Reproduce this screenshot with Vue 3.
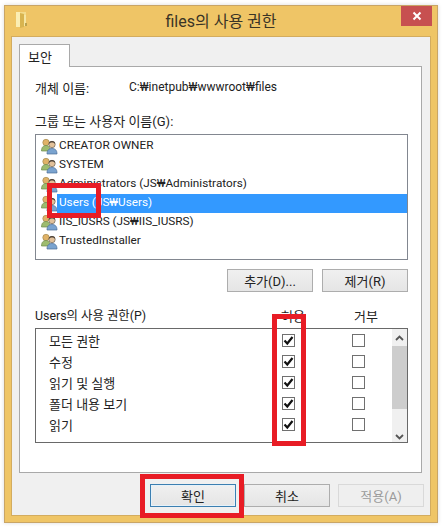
<script setup>
const users = [
  { name: 'CREATOR OWNER' },
  { name: 'SYSTEM' },
  { name: 'Administrators (JS₩Administrators)' },
  { name: 'Users (JS₩Users)', selected: true },
  { name: 'IIS_IUSRS (JS₩IIS_IUSRS)' },
  { name: 'TrustedInstaller' },
]
const perms = ['모든 권한', '수정', '읽기 및 실행', '폴더 내용 보기', '읽기']
</script>

<template>
  <div class="page">
    <div class="window">
      <header class="titlebar">
        <svg class="folder" width="14" height="18" viewBox="0 0 14 18">
          <path d="M1 1h10v14H1z" fill="#f3dc8c" />
          <path d="M1 1h4v15H1z" fill="#fbeeb4" />
          <path d="M5 2l4 1v13l-4 1z" fill="#d8b44f" />
          <path d="M9 4h2v11H9z" fill="#f6e6a2" />
          <path d="M10 12h2v3h-2z" fill="#b9a14e" />
        </svg>
        <div class="title">files의 사용 권한</div>
        <div class="close">
          <svg width="10" height="10" viewBox="0 0 10 10"><path d="M1.5 1.5l7 7M8.500 1.500l-7 7" stroke="#fff" stroke-width="2" /></svg>
        </div>
      </header>

      <main class="client">
        <div class="tabs"><div class="tab">보안</div></div>
        <section class="panel">
          <div class="object">
            <span class="obj-label">개체 이름:</span>
            <span class="obj-path">C:₩inetpub₩wwwroot₩files</span>
          </div>
          <div class="group-label">그룹 또는 사용자 이름(G):</div>
          <ul class="userlist">
            <li v-for="u in users" :key="u.name" class="user">
              <svg class="uicon" width="17" height="17" viewBox="0 0 17 17">
                <circle cx="5" cy="4.500" r="3.200" fill="#e0b267" stroke="#a58a4f" stroke-width=".7" />
                <path d="M.5 13c0-4 2-5.500 4.500-5.500S9 9 9 13z" fill="#9dbb6f" stroke="#6b8a4b" stroke-width=".7" />
                <circle cx="11" cy="6.500" r="3.200" fill="#e2c19a" stroke="#6d6355" stroke-width=".7" />
                <path d="M7.800 6c0-2.200 1.400-3 3.200-3s3.200.8 3.200 3c-1-1.200-2-1.400-3.200-1.400S8.800 4.800 7.800 6z" fill="#4d4338" />
                <path d="M6 16c0-4 2-5.500 5-5.500s5 1.500 5 5.500z" fill="#7aa3cf" stroke="#4a6d96" stroke-width=".7" />
              </svg>
              <span class="uname" :class="{ selected: u.selected }">{{ u.name }}</span>
            </li>
          </ul>
          <div class="actions">
            <button class="btn">추가(D)...</button>
            <button class="btn">제거(R)</button>
          </div>
          <div class="perm-head">
            <span class="perm-title">Users의 사용 권한(P)</span>
            <span class="col">허용</span>
            <span class="col deny">거부</span>
          </div>
          <div class="permbox">
            <div class="permrows">
              <div v-for="p in perms" :key="p" class="perm">
                <span class="pname">{{ p }}</span>
                <span class="cell">
                  <span class="check">
                    <svg width="11" height="11" viewBox="0 0 11 11"><path d="M1.500 5.500l2.800 3L9.500 2" fill="none" stroke="#111" stroke-width="2.200" /></svg>
                  </span>
                </span>
                <span class="cell"><span class="check"></span></span>
              </div>
            </div>
            <div class="scroll">
              <svg class="arrow" width="9" height="6" viewBox="0 0 9 6"><path d="M1 5l3.500-3.500L8 5" fill="none" stroke="#555" stroke-width="1.800" /></svg>
              <div class="thumb"></div>
              <svg class="arrow down" width="9" height="6" viewBox="0 0 9 6"><path d="M1 1l3.500 3.500L8 1" fill="none" stroke="#555" stroke-width="1.800" /></svg>
            </div>
          </div>
        </section>
        <footer class="footer">
          <button class="btn primary">확인</button>
          <button class="btn">취소</button>
          <button class="btn disabled">적용(A)</button>
        </footer>
      </main>

      <div class="mark mark-user"></div>
      <div class="mark mark-allow"></div>
      <div class="mark mark-ok"></div>
    </div>
  </div>
</template>

<style>
html, body { margin: 0; background: #fff; }
</style>

<style scoped>
.page {
  width: 443px;
  height: 529px;
  padding: 5px 0 0 4px;
  box-sizing: border-box;
  font-family: Roboto, "Noto Sans CJK KR", sans-serif;
  font-size: 13px;
  color: #222;
  overflow: hidden;
}
.window {
  position: relative;
  width: 434px;
  height: 518px;
  box-sizing: border-box;
  background: #efc566;
  border: 1px solid #c9a566;
  box-shadow: 0 0 4px rgba(0, 0, 0, .15);
  display: flex;
  flex-direction: column;
  padding: 0 6px 6px 6px;
}
.titlebar {
  height: 30px;
  flex: none;
  display: flex;
  align-items: center;
  justify-content: center;
  position: relative;
}
.folder { position: absolute; left: 4px; top: 5px; }
.title { font-size: 16px; color: #3a3426; margin-top: -2px; }
.close {
  position: absolute;
  right: -1px;
  top: 0;
  width: 31px;
  height: 20px;
  background: #c75050;
  display: flex;
  align-items: center;
  justify-content: center;
}
.client {
  flex: 1;
  background: #f0f0f0;
  border: 1px solid #d3ac5f;
  padding: 7px 6px 0 7px;
  display: flex;
  flex-direction: column;
  min-height: 0;
}
.tabs { height: 22px; display: flex; flex: none; }
.tab {
  width: 51px;
  height: 23px;
  box-sizing: border-box;
  background: #fff;
  border: 1px solid #a9a9a9;
  border-bottom: 0;
  position: relative;
  z-index: 1;
  padding: 2px 0 0 8px;
}
.panel {
  background: #fff;
  border: 1px solid #a9a9a9;
  width: 403px;
  height: 407px;
  box-sizing: border-box;
  padding: 0 13px 0 15px;
  flex: none;
}
.object { display: flex; height: 18px; align-items: center; margin-top: 11px; }
.obj-label { width: 94px; }
.obj-path { font-size: 12px; }
.group-label { height: 18px; line-height: 18px; margin-top: 17px; }
.userlist {
  list-style: none;
  margin: 3px 0 0;
  padding: 2px 0 0 5px;
  height: 126px;
  box-sizing: border-box;
  border: 1px solid #828790;
}
.user { height: 19px; display: flex; align-items: center; font-size: 11.75px; }
.uicon { flex: none; margin-right: -1px; }
.uname { padding: 0 2px; height: 19px; line-height: 17px; white-space: nowrap; }
.uname.selected { background: #3399ff; color: #fff; flex: 1; }
.actions { display: flex; justify-content: flex-end; gap: 9px; margin-top: 9px; }
.btn {
  width: 86px;
  height: 23px;
  box-sizing: border-box;
  border: 1px solid #adadad;
  background: linear-gradient(#f0f0f0, #e5e5e5);
  font: inherit;
  color: #222;
  padding: 0;
}
.btn.primary { border-color: #3c7fb1; box-shadow: inset 0 0 0 1px #e6f2fa; }
.btn.disabled { color: #9a9a9a; border-color: #d9d9d9; background: #efefef; }
.perm-head { display: flex; align-items: center; height: 18px; margin-top: 14px; }
.perm-title { width: 223px; font-size: 12.4px; }
.col { width: 70px; text-align: center; }
.deny { margin-left: 3px; }
.permbox {
  margin-top: 4px;
  height: 115px;
  box-sizing: border-box;
  border: 1px solid #696969;
  display: flex;
}
.permrows { flex: 1; min-width: 0; padding: 1px 0 0 13px; }
.perm { height: 21px; display: flex; align-items: center; }
.pname { width: 233px; flex: none; }
.cell { width: 70px; flex: none; display: flex; justify-content: flex-start; }
.cell:last-child { width: 30px; }
.check {
  width: 13px;
  height: 13px;
  box-sizing: border-box;
  border: 1px solid #707070;
  background: #fff;
  display: flex;
  align-items: center;
  justify-content: center;
}
.scroll {
  width: 15px;
  background: #f0f0f0;
  display: flex;
  flex-direction: column;
  align-items: center;
  flex: none;
}
.arrow { margin-top: 6px; flex: none; }
.thumb { align-self: stretch; height: 63px; background: #cdcdcd; margin-top: 5px; }
.arrow.down { margin-top: 25px; }
.footer { display: flex; justify-content: flex-end; gap: 8px; margin-top: 11px; }
.mark {
  position: absolute;
  box-sizing: border-box;
  border: 5px solid #e81c25;
  pointer-events: none;
  z-index: 5;
}
.mark-user { left: 42px; top: 177px; width: 54px; height: 35px; }
.mark-allow { left: 267px; top: 308px; width: 34px; height: 132px; }
.mark-ok { left: 135px; top: 468px; width: 104px; height: 44px; }
</style>
